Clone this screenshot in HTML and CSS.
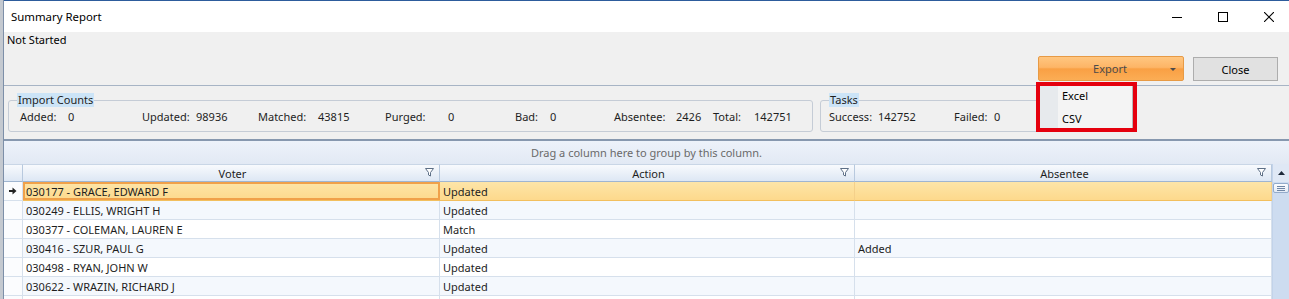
FILE: index.html
```html
<!DOCTYPE html>
<html>
<head>
<meta charset="utf-8">
<title>Summary Report</title>
<link rel="stylesheet" href="styles.css">
</head>
<body>
<div class="window">
  <header class="titlebar">
    <span class="title">Summary Report</span>
    <div class="controls">
      <span class="ctl"><svg width="10" height="10" viewBox="0 0 10 10"><path d="M0 5.5h10" stroke="#000" stroke-width="1"/></svg></span>
      <span class="ctl"><svg width="10" height="10" viewBox="0 0 10 10"><rect x="0.5" y="0.5" width="9" height="9" fill="none" stroke="#000" stroke-width="1"/></svg></span>
      <span class="ctl"><svg width="10" height="10" viewBox="0 0 10 10"><path d="M0 0L10 10M10 0L0 10" stroke="#000" stroke-width="1.1"/></svg></span>
    </div>
  </header>

  <section class="toppanel">
    <div class="status">Not Started</div>
    <div class="actions">
      <div class="btn export"><span class="export-label">Export</span><span class="caret"></span></div>
      <div class="btn close">Close</div>
    </div>
  </section>
  <div class="sep1"></div>

  <section class="counts">
    <fieldset class="group import">
      <legend>Import Counts</legend>
      <div class="vals">
        <span>Added:</span><span>0</span>
        <span>Updated:</span><span>98936</span>
        <span>Matched:</span><span>43815</span>
        <span>Purged:</span><span>0</span>
        <span>Bad:</span><span>0</span>
        <span>Absentee:</span><span>2426</span>
        <span>Total:</span><span>142751</span>
      </div>
    </fieldset>
    <fieldset class="group tasks">
      <legend>Tasks</legend>
      <div class="vals">
        <span>Success:</span><span>142752</span>
        <span>Failed:</span><span>0</span>
      </div>
    </fieldset>
  </section>
  <div class="sep2"></div>

  <section class="grid">
    <div class="grouppanel">Drag a column here to group by this column.</div>
    <div class="gridmain">
      <div class="table">
        <div class="row head">
          <div class="cell ind"></div>
          <div class="cell col1">Voter<svg class="filter" width="9" height="9" viewBox="0 0 9 9"><path d="M0.5 0.5h8L5.5 4.5v3.5l-2-1V4.5z" fill="#fff" stroke="#5d6f86" stroke-width="1"/></svg></div>
          <div class="cell col2">Action<svg class="filter" width="9" height="9" viewBox="0 0 9 9"><path d="M0.5 0.5h8L5.5 4.5v3.5l-2-1V4.5z" fill="#fff" stroke="#5d6f86" stroke-width="1"/></svg></div>
          <div class="cell col3">Absentee<svg class="filter" width="9" height="9" viewBox="0 0 9 9"><path d="M0.5 0.5h8L5.5 4.5v3.5l-2-1V4.5z" fill="#fff" stroke="#5d6f86" stroke-width="1"/></svg></div>
        </div>
        <div class="row sel">
          <div class="cell ind"><svg width="8" height="8" viewBox="0 0 8 8"><path d="M0 3h3.5V0.5L7.5 4 3.5 7.5V5H0z" fill="#222"/></svg></div>
          <div class="cell col1 focus">030177 - GRACE, EDWARD F</div>
          <div class="cell col2">Updated</div>
          <div class="cell col3"></div>
        </div>
        <div class="row alt">
          <div class="cell ind"></div>
          <div class="cell col1">030249 - ELLIS, WRIGHT H</div>
          <div class="cell col2">Updated</div>
          <div class="cell col3"></div>
        </div>
        <div class="row">
          <div class="cell ind"></div>
          <div class="cell col1">030377 - COLEMAN, LAUREN E</div>
          <div class="cell col2">Match</div>
          <div class="cell col3"></div>
        </div>
        <div class="row alt">
          <div class="cell ind"></div>
          <div class="cell col1">030416 - SZUR, PAUL G</div>
          <div class="cell col2">Updated</div>
          <div class="cell col3">Added</div>
        </div>
        <div class="row">
          <div class="cell ind"></div>
          <div class="cell col1">030498 - RYAN, JOHN W</div>
          <div class="cell col2">Updated</div>
          <div class="cell col3"></div>
        </div>
        <div class="row alt">
          <div class="cell ind"></div>
          <div class="cell col1">030622 - WRAZIN, RICHARD J</div>
          <div class="cell col2">Updated</div>
          <div class="cell col3"></div>
        </div>
        <div class="row">
          <div class="cell ind"></div>
          <div class="cell col1"></div>
          <div class="cell col2"></div>
          <div class="cell col3"></div>
        </div>
      </div>
      <div class="vscroll">
        <div class="arrow-up"><svg width="7" height="4" viewBox="0 0 7 4"><path d="M0 4L3.5 0 7 4z" fill="#1e2a3a"/></svg></div>
        <div class="thumb"><span></span><span></span><span></span></div>
      </div>
    </div>
  </section>

  <div class="menu">
    <div class="menu-item">Excel</div>
    <div class="menu-item">CSV</div>
  </div>
</div>
</body>
</html>
```

FILE: styles.css
```css
* { box-sizing: border-box; }
html, body { margin: 0; height: 100%; }
body {
  background: #c4c9d0;
  font-family: "Noto Sans", "Segoe UI", sans-serif;
  font-size: 11px;
  color: #1e1e1e;
  overflow: hidden;
}
.window {
  position: relative;
  margin-left: 3px;
  border-left: 1px solid #7d8fa8;
  height: 299px;
  overflow: hidden;
  display: flex;
  flex-direction: column;
  background: #f0f0f0;
}

/* title bar */
.titlebar {
  height: 32px;
  flex: none;
  background: #fff;
  border-top: 1px solid #2d5c9c;
  display: flex;
  align-items: center;
  justify-content: space-between;
}
.title { font-size: 11.4px; padding-left: 7px; color: #000; }
.controls { display: flex; height: 100%; margin-right: -3px; }
.ctl { width: 46px; display: flex; align-items: center; justify-content: center; }

/* top panel */
.toppanel { height: 53px; flex: none; padding-left: 3px; }
.status { line-height: 16px; color: #000; }
.actions {
  display: flex;
  justify-content: flex-end;
  align-items: flex-start;
  gap: 9px;
  padding-right: 11px;
  margin-top: 8px;
}
.btn { height: 25px; display: flex; align-items: center; justify-content: center; }
.export {
  position: relative;
  width: 146px;
  border: 1px solid #e79a45;
  border-radius: 2px;
  background: linear-gradient(#ffc680 0%, #fdb566 45%, #f9a044 52%, #fbad55 100%);
  color: #4b4b4b;
}
.export-label { margin-left: -2px; }
.caret {
  position: absolute;
  right: 7px;
  top: 11px;
  width: 0; height: 0;
  border-left: 3px solid transparent;
  border-right: 3px solid transparent;
  border-top: 3px solid #4b4b4b;
}
.close {
  width: 85px;
  height: 24px;
  margin-top: 1px;
  border: 1px solid #adadad;
  background: #e1e1e1;
  color: #000;
}
.sep1 { height: 1px; flex: none; background: #a7b4c5; }

/* counts */
.counts {
  height: 53px;
  flex: none;
  display: flex;
  gap: 7px;
  padding-left: 4px;
  padding-top: 7px;
}
.group {
  margin: 0;
  border: 1px solid #c5ccd6;
  border-radius: 3px;
  padding: 0 0 0 8px;
  height: 39px;
  min-width: 0;
}
.group legend {
  padding: 0 1px;
  background: #cce4f7;
  line-height: 14px;
  font-size: 11px;
  color: #1e1e1e;
}
.vals { display: grid; line-height: 14px; padding-top: 3px; }
.import { width: 805px; }
.import .vals {
  padding-left: 3px;
  grid-template-columns: 48px 74px 54px 62px 60px 67px 63px 67px 35px 64px 62px 37px 41px auto;
}
.tasks { width: 300px; }
.tasks .vals {
  padding-left: 0;
  grid-template-columns: 49px 76px 40px auto;
}
.sep2 { height: 2px; flex: none; background: #8798af; }

/* grid */
.grid { flex: 1; display: flex; flex-direction: column; min-height: 0; overflow: hidden; }
.grouppanel {
  height: 23px;
  flex: none;
  background: linear-gradient(#edf2fa, #e2e9f4);
  color: #6a6a6a;
  display: flex;
  align-items: center;
  justify-content: center;
  padding-bottom: 1px;
}
.gridmain { flex: 1; display: flex; min-height: 0; }
.table { width: 1268px; flex: none; background: #fff; }
.row { display: flex; height: 19px; }
.cell {
  height: 100%;
  border-right: 1px solid #d6e0ec;
  border-bottom: 1px solid #d6e0ec;
  padding-left: 3px;
  display: flex;
  align-items: center;
  white-space: nowrap;
  overflow: hidden;
}
.ind { width: 19px; padding-left: 0; justify-content: center; background: #fbfcfe; }
.col1 { width: 417px; }
.col2 { width: 415px; }
.col3 { width: 417px; }
.row.alt .cell:not(.ind) { background: #f4f8fd; }
.row.head { height: 18px; }
.row.head .cell {
  background: linear-gradient(#f8fafd, #dde7f4);
  border-right: 1px solid #b8c9de;
  border-bottom: 1px solid #9fb5d0;
  border-top: 1px solid #c9d6e6;
  justify-content: center;
  position: relative;
  color: #1e1e1e;
}
.filter { position: absolute; right: 5px; top: 3px; }
.row.sel .cell:not(.ind) {
  background: linear-gradient(#fde5a8, #fdd98c);
  border-bottom: 1px solid #f2bf5e;
  border-right-color: #f4d08a;
}
.row.sel .ind { background: #fbfcfe; }
.cell.focus { box-shadow: inset 0 0 0 2px #f0a14a; border-right: none; }

.vscroll {
  flex: 1;
  background: #cddcf0;
  border-left: 1px solid #c2d3ea;
  display: flex;
  flex-direction: column;
  align-items: center;
}
.arrow-up { height: 18px; display: flex; align-items: center; justify-content: center; width: 100%; background: #dfe8f5; }
.thumb {
  width: 16px;
  height: 10px;
  margin-top: 1px;
  border: 1px solid #93abcb;
  border-radius: 2px;
  background: linear-gradient(#fbfcfe, #e3ebf6);
  display: flex;
  flex-direction: column;
  align-items: center;
  justify-content: center;
  gap: 1px;
}
.thumb span { width: 8px; height: 1px; background: #6f86a6; }

/* dropdown menu */
.menu {
  position: absolute;
  left: 1032px;
  top: 82px;
  width: 101px;
  height: 50px;
  border: 4px solid #e5000e;
  background: linear-gradient(90deg, #e7eaed 0, #e7eaed 18px, #f4f4f4 18px);
  box-shadow: inset -1px 0 0 #b7b7b7;
  overflow: hidden;
}
.menu-item { height: 20px; line-height: 20px; padding-left: 22px; color: #000; margin-bottom: 3px; }
```
